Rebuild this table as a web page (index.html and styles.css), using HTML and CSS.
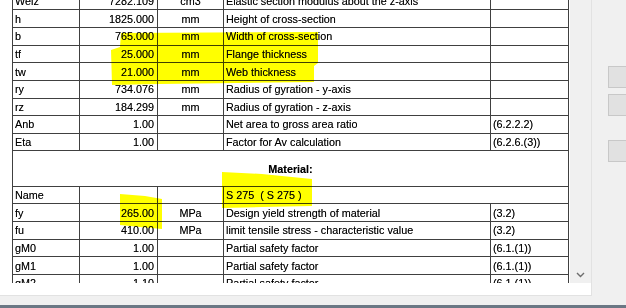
FILE: index.html
```html
<!DOCTYPE html>
<html>
<head>
<meta charset="utf-8">
<link rel="stylesheet" href="styles.css">
</head>
<body>
<div class="window">
  <div class="panel">
    <div class="viewport">
      <table class="props">
        <colgroup>
          <col class="c-name"><col class="c-val"><col class="c-unit"><col class="c-desc"><col class="c-ref">
        </colgroup>
        <tbody>
          <tr><td>Welz</td><td class="num">7282.109</td><td class="unit">cm3</td><td>Elastic section modulus about the z-axis</td><td></td></tr>
          <tr><td>h</td><td class="num">1825.000</td><td class="unit">mm</td><td>Height of cross-section</td><td></td></tr>
          <tr><td>b</td><td class="num">765.000</td><td class="unit">mm</td><td>Width of cross-section</td><td></td></tr>
          <tr><td>tf</td><td class="num">25.000</td><td class="unit">mm</td><td>Flange thickness</td><td></td></tr>
          <tr><td>tw</td><td class="num">21.000</td><td class="unit">mm</td><td>Web thickness</td><td></td></tr>
          <tr><td>ry</td><td class="num">734.076</td><td class="unit">mm</td><td>Radius of gyration - y-axis</td><td></td></tr>
          <tr><td>rz</td><td class="num">184.299</td><td class="unit">mm</td><td>Radius of gyration - z-axis</td><td></td></tr>
          <tr><td>Anb</td><td class="num">1.00</td><td class="unit"></td><td>Net area to gross area ratio</td><td>(6.2.2.2)</td></tr>
          <tr><td>Eta</td><td class="num">1.00</td><td class="unit"></td><td>Factor for Av calculation</td><td>(6.2.6.(3))</td></tr>
          <tr class="section"><td colspan="5">Material:</td></tr>
          <tr><td>Name</td><td class="num"></td><td class="unit"></td><td colspan="2">S 275&nbsp; ( S 275 )</td></tr>
          <tr><td>fy</td><td class="num">265.00</td><td class="unit">MPa</td><td>Design yield strength of material</td><td>(3.2)</td></tr>
          <tr><td>fu</td><td class="num">410.00</td><td class="unit">MPa</td><td>limit tensile stress - characteristic value</td><td>(3.2)</td></tr>
          <tr><td>gM0</td><td class="num">1.00</td><td class="unit"></td><td>Partial safety factor</td><td>(6.1.(1))</td></tr>
          <tr><td>gM1</td><td class="num">1.00</td><td class="unit"></td><td>Partial safety factor</td><td>(6.1.(1))</td></tr>
          <tr><td>gM2</td><td class="num">1.10</td><td class="unit"></td><td>Partial safety factor</td><td>(6.1.(1))</td></tr>
        </tbody>
      </table>
    </div>
    <div class="scrollbar">
      <svg class="chev" width="9" height="6" viewBox="0 0 9 6"><polyline points="1,1 4.5,4.5 8,1" fill="none" stroke="#6d6d6d" stroke-width="1.4"/></svg>
    </div>
    <svg class="marks" width="603" height="295" viewBox="0 0 603 295">
      <polygon points="121,33 318,32 318,63 314,66 314,82 160,84 112,85 111,50 120,47"/>
      <polygon points="222,172 262,174 312,179 312,206 262,207 222,208"/>
      <polygon points="120,194 145,196 162,199 162,229 140,227 120,225"/>
    </svg>
  </div>
  <div class="side">
    <button class="btn"></button>
    <button class="btn"></button>
    <button class="btn gap"></button>
  </div>
</div>
<div class="status"></div>
</body>
</html>
```

FILE: styles.css
```css
html, body {
  margin: 0;
  padding: 0;
}
body {
  width: 626px;
  height: 308px;
  overflow: hidden;
  background: #f0f0f0;
  font-family: "Liberation Sans", Arial, sans-serif;
  font-size: 10.8px;
  color: #000;
}
.window {
  display: flex;
  height: 305px;
}
.panel {
  position: relative;
  width: 602px;
  height: 295px;
  background: #fff;
  border-right: 1px solid #e2e2e2;
  border-bottom: 1px solid #e2e2e2;
  display: flex;
  align-items: flex-start;
}
.viewport {
  margin-left: 12px;
  width: 557px;
  height: 283px;
  overflow: hidden;
}
.props {
  margin-top: -8.35px;
  width: 556px;
  table-layout: fixed;
  border-collapse: collapse;
}
.c-name { width: 67px; }
.c-val { width: 78px; }
.c-unit { width: 66px; }
.c-desc { width: 267px; }
.c-ref { width: 78px; }
.props td {
  border: 1px solid #404040;
  height: 16.65px;
  padding: 0 2px;
  line-height: 16px;
  white-space: nowrap;
  overflow: hidden;
  vertical-align: middle;
  text-shadow: 0 0 0.4px rgba(0, 0, 0, 0.5);
}
.props td.num {
  text-align: right;
  padding-right: 3px;
}
.props td.unit {
  text-align: center;
}
.props tr.section td {
  height: 34.3px;
  text-align: center;
  font-weight: bold;
}
.scrollbar {
  margin-left: 1px;
  width: 21px;
  height: 283px;
  background: #f0f0f0;
  display: flex;
  justify-content: center;
  align-items: flex-end;
}
.chev {
  display: block;
  margin-bottom: 5px;
}
.marks {
  position: absolute;
  left: 0;
  top: 0;
  pointer-events: none;
  mix-blend-mode: multiply;
}
.marks polygon {
  fill: #ffff00;
}
.side {
  flex: 1;
  display: flex;
  flex-direction: column;
  align-items: flex-start;
  padding: 66px 0 0 16px;
  gap: 6px;
}
.btn {
  width: 30px;
  height: 22px;
  margin: 0;
  padding: 0;
  background: #e1e1e1;
  border: 1px solid #c8c8c8;
  border-radius: 0;
}
.btn.gap {
  margin-top: 18px;
}
.status {
  height: 3px;
  background: #6b7784;
}
```
